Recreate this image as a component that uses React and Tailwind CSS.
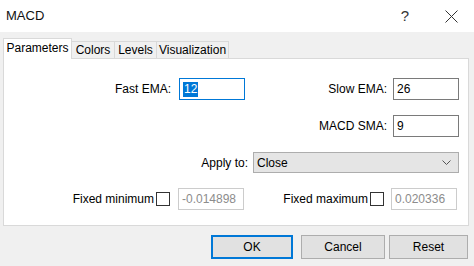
import React from "react";

const font = { fontFamily: '"Liberation Sans", Arial, sans-serif' };

function Field({ value, focused, disabled, w = "w-[66px]" }) {
  return (
    <div
      className={`${w} h-[22px] flex items-center pl-[3px] text-[12px] ${
        focused
          ? "border border-[#0078d7] bg-white text-black"
          : disabled
          ? "border border-[#cccccc] bg-white text-[#8c8c8c]"
          : "border border-[#7a7a7a] bg-white text-black"
      }`}
    >
      {focused ? (
        <span className="bg-[#0078d7] text-white leading-[15px] px-[1px]">{value}</span>
      ) : (
        <span>{value}</span>
      )}
    </div>
  );
}

function Checkbox() {
  return <div className="w-[14px] h-[14px] border border-[#333333] bg-white shrink-0" />;
}

export default function App() {
  return (
    <div className="w-[474px] h-[266px] bg-[#f0f0f0] text-black overflow-hidden" style={font}>
      {/* Title bar */}
      <div className="h-[32px] bg-white flex items-center">
        <span className="ml-[6px] text-[13px] text-[#111]">MACD</span>
        <span className="ml-auto mr-[36px] text-[15px] text-[#333] font-light">?</span>
        <svg width="13" height="13" viewBox="0 0 13 13" className="mr-[16px]">
          <path d="M0.5 0.5 L12.5 12.5 M12.5 0.5 L0.5 12.5" stroke="#333" strokeWidth="1" />
        </svg>
      </div>

      {/* Tabs */}
      <div className="h-[26px] flex items-end pl-[3px] relative z-10">
        <div className="h-[21px] w-[69px] bg-white border border-b-0 border-[#d9d9d9] flex items-center justify-center text-[12px] mb-[-1px] pb-[3px]">
          Parameters
        </div>
        <div className="h-[17px] w-[43px] bg-[#f0f0f0] border border-l-0 border-b-0 border-[#d9d9d9] flex items-center justify-center text-[12px] mb-[0px]">
          Colors
        </div>
        <div className="h-[17px] w-[42px] bg-[#f0f0f0] border border-l-0 border-b-0 border-[#d9d9d9] flex items-center justify-center text-[12px]">
          Levels
        </div>
        <div className="h-[17px] w-[72px] bg-[#f0f0f0] border border-l-0 border-b-0 border-[#d9d9d9] flex items-center justify-center text-[12px]">
          Visualization
        </div>
      </div>

      {/* Panel */}
      <div className="ml-[3px] w-[466px] h-[168px] bg-white border border-[#d9d9d9] text-[12px] pt-[19px] flex flex-col">
        {/* Row 1 */}
        <div className="flex items-center h-[22px]">
          <div className="w-[168px] text-right pr-[1px]">Fast EMA:</div>
          <div className="ml-[7px]">
            <Field value="12" focused />
          </div>
          <div className="w-[142px] text-right">Slow EMA:</div>
          <div className="ml-[6px]">
            <Field value="26" />
          </div>
        </div>
        {/* Row 2 */}
        <div className="flex items-center h-[22px] mt-[15px]">
          <div className="w-[383px] text-right">MACD SMA:</div>
          <div className="ml-[6px]">
            <Field value="9" />
          </div>
        </div>
        {/* Row 3 */}
        <div className="flex items-center h-[21px] mt-[15px]">
          <div className="w-[244px] text-right">Apply to:</div>
          <div className="ml-[5px] w-[206px] h-[21px] bg-[#e5e5e5] border border-[#adadad] flex items-center pl-[3px]">
            <span>Close</span>
            <svg width="9" height="5" viewBox="0 0 9 5" className="ml-auto mr-[7px]">
              <path d="M0.5 0.5 L4.5 4.5 L8.5 0.5" fill="none" stroke="#555" strokeWidth="1" />
            </svg>
          </div>
        </div>
        {/* Row 4 */}
        <div className="flex items-center h-[22px] mt-[15px]">
          <div className="w-[150px] text-right">Fixed minimum</div>
          <div className="ml-[2px]">
            <Checkbox />
          </div>
          <div className="ml-[8px]">
            <Field value="-0.014898" disabled />
          </div>
          <div className="w-[124px] text-right">Fixed maximum</div>
          <div className="ml-[2px]">
            <Checkbox />
          </div>
          <div className="ml-[7px]">
            <Field value="0.020336" disabled />
          </div>
        </div>
      </div>

      {/* Buttons */}
      <div className="flex mt-[9px] pl-[211px] text-[12px]">
        <button className="w-[82px] h-[24px] bg-[#e1e1e1] border-2 border-[#0078d7] flex items-center justify-center">
          OK
        </button>
        <button className="ml-[8px] w-[84px] h-[24px] bg-[#e1e1e1] border border-[#adadad] flex items-center justify-center">
          Cancel
        </button>
        <button className="ml-[4px] w-[79px] h-[24px] bg-[#e1e1e1] border border-[#adadad] flex items-center justify-center">
          Reset
        </button>
      </div>
    </div>
  );
}
